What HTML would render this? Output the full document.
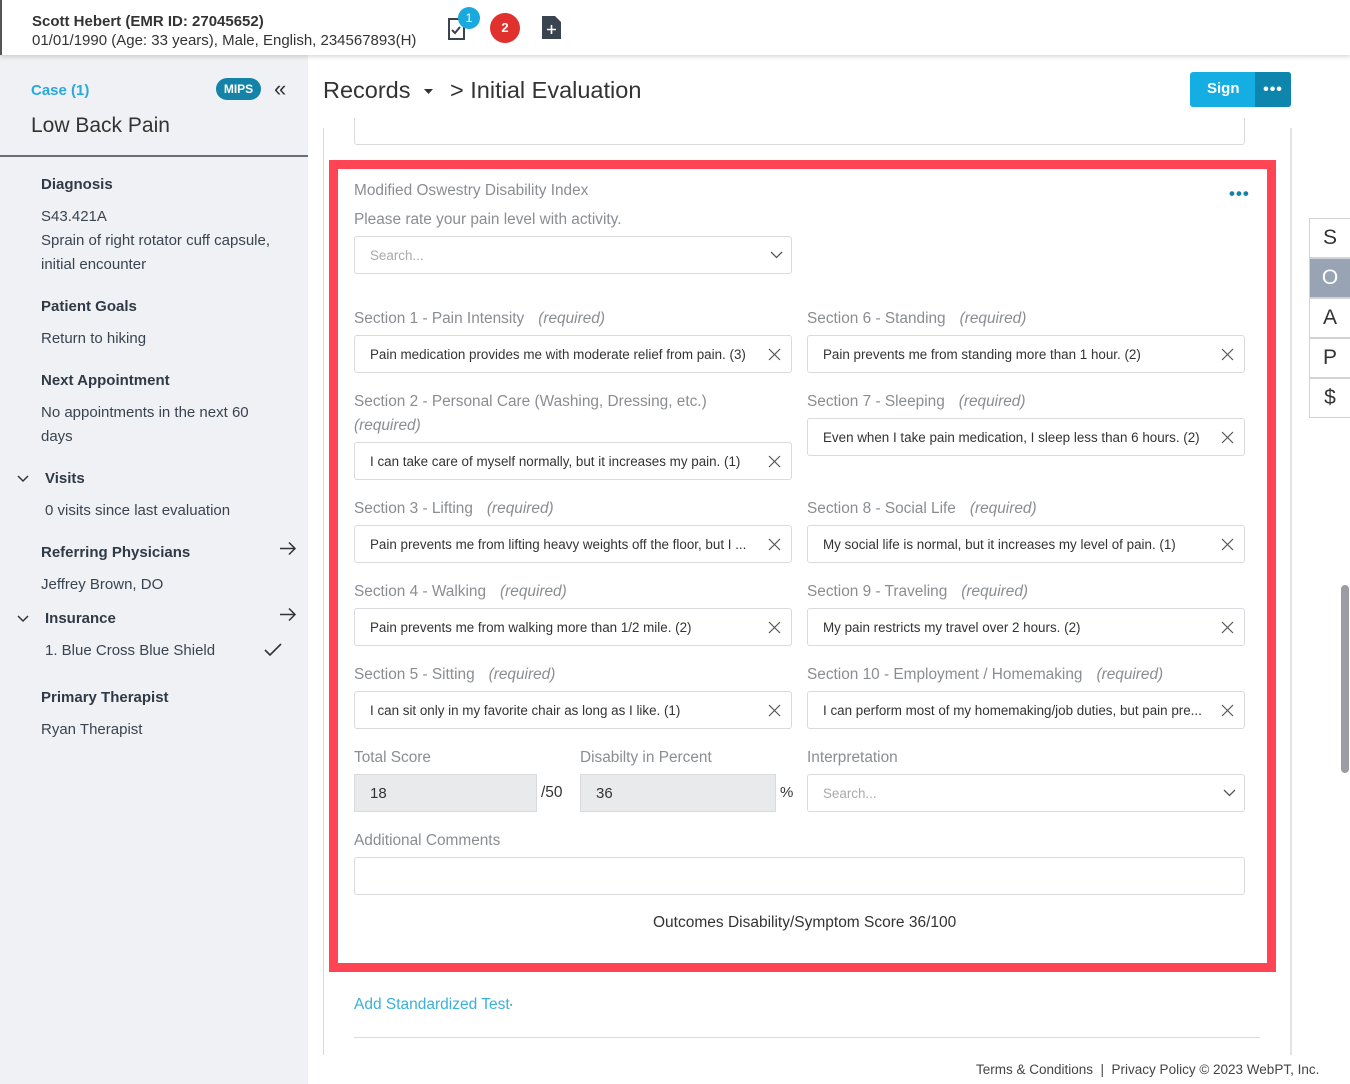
<!DOCTYPE html>
<html><head><meta charset="utf-8"><style>
*{box-sizing:border-box;margin:0;padding:0}
body{width:1350px;height:1084px;position:relative;overflow:hidden;background:#fff;font-family:"Liberation Sans",Arial,sans-serif;color:#333}
.a{position:absolute;white-space:nowrap}
.hdr{left:0;top:0;width:1350px;height:55px;background:#fff;border-left:2px solid #555;box-shadow:0 2px 4px rgba(0,0,0,.15);z-index:3}
.side{left:0;top:55px;width:308px;height:1029px;background:#f0f1f4}
.sh{font-size:15px;font-weight:bold;color:#2f3a46}
.st{font-size:15px;color:#3a4450}
.lbl{font-size:15.4px;color:#8a8d91;line-height:20px}
.lbl i{margin-left:14px}
.fld{height:38px;border:1px solid #d8dadd;border-radius:3px;background:#fff;font-size:13.4px;color:#333;line-height:37px;padding-left:15px}
.fld svg.x{position:absolute;right:10px;top:12px}
.ph{color:#aaa}
.tab{left:1309px;width:41px;height:40px;border:1px solid #d0d3d7;border-right:none;font-size:21px;text-align:center;line-height:38px;color:#333;background:#fff}
</style></head><body>
<svg width="0" height="0" style="position:absolute"><defs><symbol id="x" viewBox="0 0 13 13"><path d="M1 1l11 11M12 1L1 12" stroke="#555" stroke-width="1.2"/></symbol></defs></svg>
<div class="a hdr">
 <div class="a" style="left:30px;top:13px;font-size:15px;font-weight:bold;color:#333">Scott Hebert (EMR ID: 27045652)</div>
 <div class="a" style="left:30px;top:32px;font-size:15px;color:#333">01/01/1990 (Age: 33 years), Male, English, 234567893(H)</div>
 <svg class="a" style="left:444px;top:17px" width="22" height="24" viewBox="0 0 22 24"><path d="M3 2h10l5 5v15H3z" fill="none" stroke="#3a4450" stroke-width="2"/><path d="M6 13l3 3 5-6" fill="none" stroke="#3a4450" stroke-width="2"/></svg>
 <div class="a" style="left:456px;top:7px;width:22px;height:22px;border-radius:50%;background:#1aa9dc;color:#fff;font-size:12px;text-align:center;line-height:22px">1</div>
 <div class="a" style="left:488px;top:13px;width:30px;height:30px;border-radius:50%;background:#e0312f;color:#fff;font-size:13px;font-weight:bold;text-align:center;line-height:30px">2</div>
 <svg class="a" style="left:539px;top:15px" width="22" height="25" viewBox="0 0 22 25"><path d="M1 1h13l6 6v17H1z" fill="#3a4450"/><path d="M10.5 10v9M6 14.5h9" stroke="#fff" stroke-width="1.6"/></svg>
</div>
<div class="a side"></div>
<div class="a" style="left:31px;top:82px;font-size:15px;font-weight:bold;color:#29a9d9">Case (1)</div>
<div class="a" style="left:216px;top:78px;width:45px;height:22px;border-radius:11px;background:#1583a8;color:#fff;font-size:12px;font-weight:bold;text-align:center;line-height:22px">MIPS</div>
<div class="a" style="left:274px;top:76px;font-size:22px;color:#333">«</div>
<div class="a" style="left:31px;top:114px;font-size:21px;color:#333">Low Back Pain</div>
<div class="a" style="left:0;top:155px;width:308px;height:2px;background:#6a6f76"></div>
<div class="a sh" style="left:41px;top:176px">Diagnosis</div>
<div class="a st" style="left:41px;top:208px">S43.421A</div>
<div class="a st" style="left:41px;top:232px">Sprain of right rotator cuff capsule,</div>
<div class="a st" style="left:41px;top:256px">initial encounter</div>
<div class="a sh" style="left:41px;top:298px">Patient Goals</div>
<div class="a st" style="left:41px;top:330px">Return to hiking</div>
<div class="a sh" style="left:41px;top:372px">Next Appointment</div>
<div class="a st" style="left:41px;top:404px">No appointments in the next 60</div>
<div class="a st" style="left:41px;top:428px">days</div>
<svg class="a" style="left:17px;top:475px" width="12" height="8"><path d="M1 1l5 5 5-5" fill="none" stroke="#333" stroke-width="1.5"/></svg>
<div class="a sh" style="left:45px;top:470px">Visits</div>
<div class="a st" style="left:45px;top:502px">0 visits since last evaluation</div>
<div class="a sh" style="left:41px;top:544px">Referring Physicians</div>
<svg class="a" style="left:279px;top:541px" width="18" height="15"><path d="M1 7.5h15M10 1.5l6 6-6 6" fill="none" stroke="#333" stroke-width="1.5"/></svg>
<svg class="a" style="left:17px;top:615px" width="12" height="8"><path d="M1 1l5 5 5-5" fill="none" stroke="#333" stroke-width="1.5"/></svg>
<div class="a st" style="left:41px;top:576px">Jeffrey Brown, DO</div>
<div class="a sh" style="left:45px;top:610px">Insurance</div>
<svg class="a" style="left:279px;top:607px" width="18" height="15"><path d="M1 7.5h15M10 1.5l6 6-6 6" fill="none" stroke="#333" stroke-width="1.5"/></svg>
<div class="a st" style="left:45px;top:642px">1. Blue Cross Blue Shield</div>
<svg class="a" style="left:264px;top:643px" width="18" height="14"><path d="M1 7l5 5L17 1" fill="none" stroke="#333" stroke-width="1.6"/></svg>
<div class="a sh" style="left:41px;top:689px">Primary Therapist</div>
<div class="a st" style="left:41px;top:721px">Ryan Therapist</div>

<div class="a" style="left:323px;top:77px;font-size:23.5px;color:#333">Records</div>
<svg class="a" style="left:424px;top:89px" width="9" height="5"><path d="M0 0h9L4.5 5z" fill="#333"/></svg>
<div class="a" style="left:450px;top:77px;font-size:23.5px;color:#333">&gt; Initial Evaluation</div>
<div class="a" style="left:1190px;top:72px;width:101px;height:35px;border-radius:3px;background:#14aee2;overflow:hidden">
 <div class="a" style="left:17px;top:8px;color:#fff;font-weight:bold;font-size:15px">Sign</div>
 <div class="a" style="left:65px;top:0;width:36px;height:35px;background:#0d85ad;color:#fff;text-align:center;line-height:35px;font-size:16px;font-weight:bold;letter-spacing:1px">•••</div>
</div>
<div class="a" style="left:323px;top:128px;width:1px;height:927px;background:#d6d8db"></div>
<div class="a" style="left:1290px;top:128px;width:2px;height:927px;background:#e1e3e6"></div>
<div class="a" style="left:354px;top:118px;width:891px;height:27px;border:1px solid #d8dadd;border-top:none;border-radius:0 0 3px 3px"></div>

<div class="a" style="left:329px;top:160px;width:947px;height:812px;border:9px solid #ff4553"></div>
<div class="a lbl" style="left:354px;top:181px">Modified Oswestry Disability Index</div>
<div class="a" style="left:1229px;top:184px;color:#1583a8;font-size:17px;font-weight:bold;letter-spacing:1px">•••</div>
<div class="a lbl" style="left:354px;top:210px">Please rate your pain level with activity.</div>
<div class="a fld" style="left:354px;top:236px;width:438px"><span class="ph">Search...</span><svg class="a" style="right:8px;top:14px" width="13" height="8"><path d="M1 1l5.5 5.5L12 1" fill="none" stroke="#555" stroke-width="1.3"/></svg></div>

<div class="a lbl" style="left:354px;top:309px">Section 1 - Pain Intensity<i>(required)</i></div>
<div class="a fld" style="left:354px;top:335px;width:438px">Pain medication provides me with moderate relief from pain. (3)<svg class="x" width="13" height="13"><use href="#x"/></svg></div>
<div class="a lbl" style="left:354px;top:392px">Section 2 - Personal Care (Washing, Dressing, etc.)</div>
<div class="a lbl" style="left:354px;top:416px"><i style="margin:0">(required)</i></div>
<div class="a fld" style="left:354px;top:442px;width:438px">I can take care of myself normally, but it increases my pain. (1)<svg class="x" width="13" height="13"><use href="#x"/></svg></div>
<div class="a lbl" style="left:354px;top:499px">Section 3 - Lifting<i>(required)</i></div>
<div class="a fld" style="left:354px;top:525px;width:438px">Pain prevents me from lifting heavy weights off the floor, but I ...<svg class="x" width="13" height="13"><use href="#x"/></svg></div>
<div class="a lbl" style="left:354px;top:582px">Section 4 - Walking<i>(required)</i></div>
<div class="a fld" style="left:354px;top:608px;width:438px">Pain prevents me from walking more than 1/2 mile. (2)<svg class="x" width="13" height="13"><use href="#x"/></svg></div>
<div class="a lbl" style="left:354px;top:665px">Section 5 - Sitting<i>(required)</i></div>
<div class="a fld" style="left:354px;top:691px;width:438px">I can sit only in my favorite chair as long as I like. (1)<svg class="x" width="13" height="13"><use href="#x"/></svg></div>

<div class="a lbl" style="left:807px;top:309px">Section 6 - Standing<i>(required)</i></div>
<div class="a fld" style="left:807px;top:335px;width:438px">Pain prevents me from standing more than 1 hour. (2)<svg class="x" width="13" height="13"><use href="#x"/></svg></div>
<div class="a lbl" style="left:807px;top:392px">Section 7 - Sleeping<i>(required)</i></div>
<div class="a fld" style="left:807px;top:418px;width:438px">Even when I take pain medication, I sleep less than 6 hours. (2)<svg class="x" width="13" height="13"><use href="#x"/></svg></div>
<div class="a lbl" style="left:807px;top:499px">Section 8 - Social Life<i>(required)</i></div>
<div class="a fld" style="left:807px;top:525px;width:438px">My social life is normal, but it increases my level of pain. (1)<svg class="x" width="13" height="13"><use href="#x"/></svg></div>
<div class="a lbl" style="left:807px;top:582px">Section 9 - Traveling<i>(required)</i></div>
<div class="a fld" style="left:807px;top:608px;width:438px">My pain restricts my travel over 2 hours. (2)<svg class="x" width="13" height="13"><use href="#x"/></svg></div>
<div class="a lbl" style="left:807px;top:665px">Section 10 - Employment / Homemaking<i>(required)</i></div>
<div class="a fld" style="left:807px;top:691px;width:438px">I can perform most of my homemaking/job duties, but pain pre...<svg class="x" width="13" height="13"><use href="#x"/></svg></div>

<div class="a lbl" style="left:354px;top:748px">Total Score</div>
<div class="a lbl" style="left:580px;top:748px">Disabilty in Percent</div>
<div class="a lbl" style="left:807px;top:748px">Interpretation</div>
<div class="a fld" style="left:354px;top:774px;width:183px;background:#e9eaec;font-size:15px;border-radius:0">18</div>
<div class="a" style="left:541px;top:784px;font-size:15.5px">/50</div>
<div class="a fld" style="left:580px;top:774px;width:196px;background:#e9eaec;font-size:15px;border-radius:0">36</div>
<div class="a" style="left:780px;top:784px;font-size:15px">%</div>
<div class="a fld" style="left:807px;top:774px;width:438px"><span class="ph">Search...</span><svg class="a" style="right:8px;top:14px" width="13" height="8"><path d="M1 1l5.5 5.5L12 1" fill="none" stroke="#555" stroke-width="1.3"/></svg></div>
<div class="a lbl" style="left:354px;top:831px">Additional Comments</div>
<div class="a fld" style="left:354px;top:857px;width:891px"></div>
<div class="a" style="left:653px;top:914px;font-size:15.5px;color:#333">Outcomes Disability/Symptom Score 36/100</div>

<div class="a" style="left:354px;top:996px;font-size:15.5px;color:#3bb0d9">Add Standardized Test<span style="font-size:8px;vertical-align:middle">•</span></div>
<div class="a" style="left:354px;top:1037px;width:906px;height:1px;background:#d8dadd"></div>
<div class="a" style="left:976px;top:1062px;font-size:13.5px;color:#444">Terms &amp; Conditions &nbsp;|&nbsp; Privacy Policy © 2023 WebPT, Inc.</div>

<div class="a tab" style="top:218px">S</div>
<div class="a tab" style="top:258px;background:#98a4b3;color:#fff">O</div>
<div class="a tab" style="top:298px">A</div>
<div class="a tab" style="top:338px">P</div>
<div class="a tab" style="top:378px">$</div>
<div class="a" style="left:1341px;top:585px;width:8px;height:188px;border-radius:4px;background:#9a9da1"></div>
</body></html>
